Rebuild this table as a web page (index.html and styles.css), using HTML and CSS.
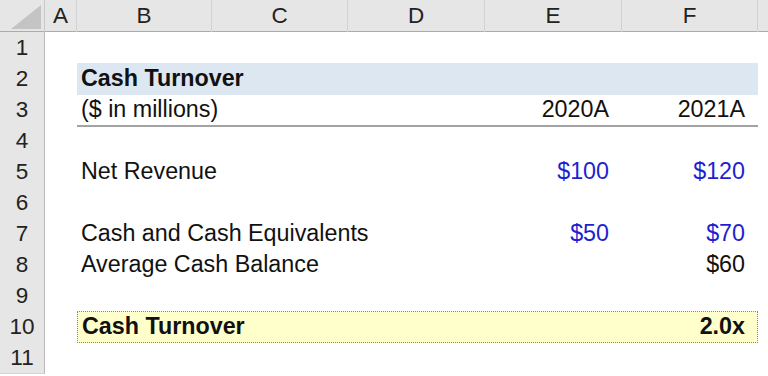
FILE: index.html
```html
<!DOCTYPE html>
<html>
<head>
<meta charset="utf-8">
<link rel="stylesheet" href="styles.css">
</head>
<body>
<div class="sheet">
  <div class="row head">
    <div class="corner"><svg class="tri" width="30" height="24" viewBox="0 0 30 24"><polygon points="0,24 30,24 30,0" fill="#c4c4c4"/></svg></div>
    <div class="col">A</div>
    <div class="col">B</div>
    <div class="col">C</div>
    <div class="col">D</div>
    <div class="col">E</div>
    <div class="col">F</div>
    <div class="col last"></div>
  </div>

  <div class="row"><div class="rh">1</div></div>

  <div class="row">
    <div class="rh">2</div><div></div>
    <div class="band blue bold">Cash Turnover</div>
  </div>

  <div class="row">
    <div class="rh">3</div><div></div>
    <div class="span3 txt ul">($ in millions)</div>
    <div class="num ul">2020A</div>
    <div class="num ul">2021A</div>
  </div>

  <div class="row"><div class="rh">4</div></div>

  <div class="row">
    <div class="rh">5</div><div></div>
    <div class="span3 txt">Net Revenue</div>
    <div class="num in">$100</div>
    <div class="num in">$120</div>
  </div>

  <div class="row"><div class="rh">6</div></div>

  <div class="row">
    <div class="rh">7</div><div></div>
    <div class="span3 txt">Cash and Cash Equivalents</div>
    <div class="num in">$50</div>
    <div class="num in">$70</div>
  </div>

  <div class="row">
    <div class="rh">8</div><div></div>
    <div class="span3 txt">Average Cash Balance</div>
    <div class="num"></div>
    <div class="num">$60</div>
  </div>

  <div class="row"><div class="rh">9</div></div>

  <div class="row">
    <div class="rh">10</div><div></div>
    <div class="band yellow bold"><span>Cash Turnover</span><span>2.0x</span></div>
  </div>

  <div class="row"><div class="rh">11</div></div>
</div>
</body>
</html>
```

FILE: styles.css
```css
html, body {
  margin: 0;
  padding: 0;
  background: #ffffff;
}

body {
  font-family: "Liberation Sans", Arial, sans-serif;
  color: #111;
  width: 768px;
  height: 376px;
  overflow: hidden;
}

.sheet {
  display: flex;
  flex-direction: column;
}

.row {
  display: grid;
  grid-template-columns: 45px 32px 135px 136px 137px 137px 136px 1fr;
  height: 31px;
  font-size: 23.3px;
  line-height: 31px;
}

.head {
  height: 32px;
  line-height: 32px;
  background: #e6e6e6;
  border-bottom: 1px solid #ababab;
  box-sizing: border-box;
}

.corner {
  position: relative;
  border-right: 1px solid #c8c8c8;
}

.tri {
  position: absolute;
  right: 3px;
  bottom: 3px;
}

.col {
  text-align: center;
  font-size: 22.5px;
  color: #222;
  border-right: 1px solid #d2d2d2;
}

.col.last {
  border-right: none;
}

.rh {
  background: #e6e6e6;
  border-right: 1px solid #b8b8b8;
  border-bottom: 1px solid #d3d3d3;
  box-sizing: border-box;
  text-align: center;
  font-size: 22.5px;
  color: #222;
}

.band {
  grid-column: 3 / 8;
  padding-left: 4px;
  box-sizing: border-box;
}

.blue {
  background: #dde7f2;
}

.yellow {
  background: #ffffcc;
  border: 1px dotted #8a8a7a;
  display: flex;
  justify-content: space-between;
  padding-right: 12px;
  line-height: 29px;
}

.bold {
  font-weight: bold;
}

.span3 {
  grid-column: 3 / 6;
}

.txt {
  padding-left: 4px;
}

.num {
  text-align: right;
  padding-right: 13px;
}

.in {
  color: #1f1fd0;
}

.ul {
  border-bottom: 2px solid #a3a3a3;
  box-sizing: border-box;
}
```
